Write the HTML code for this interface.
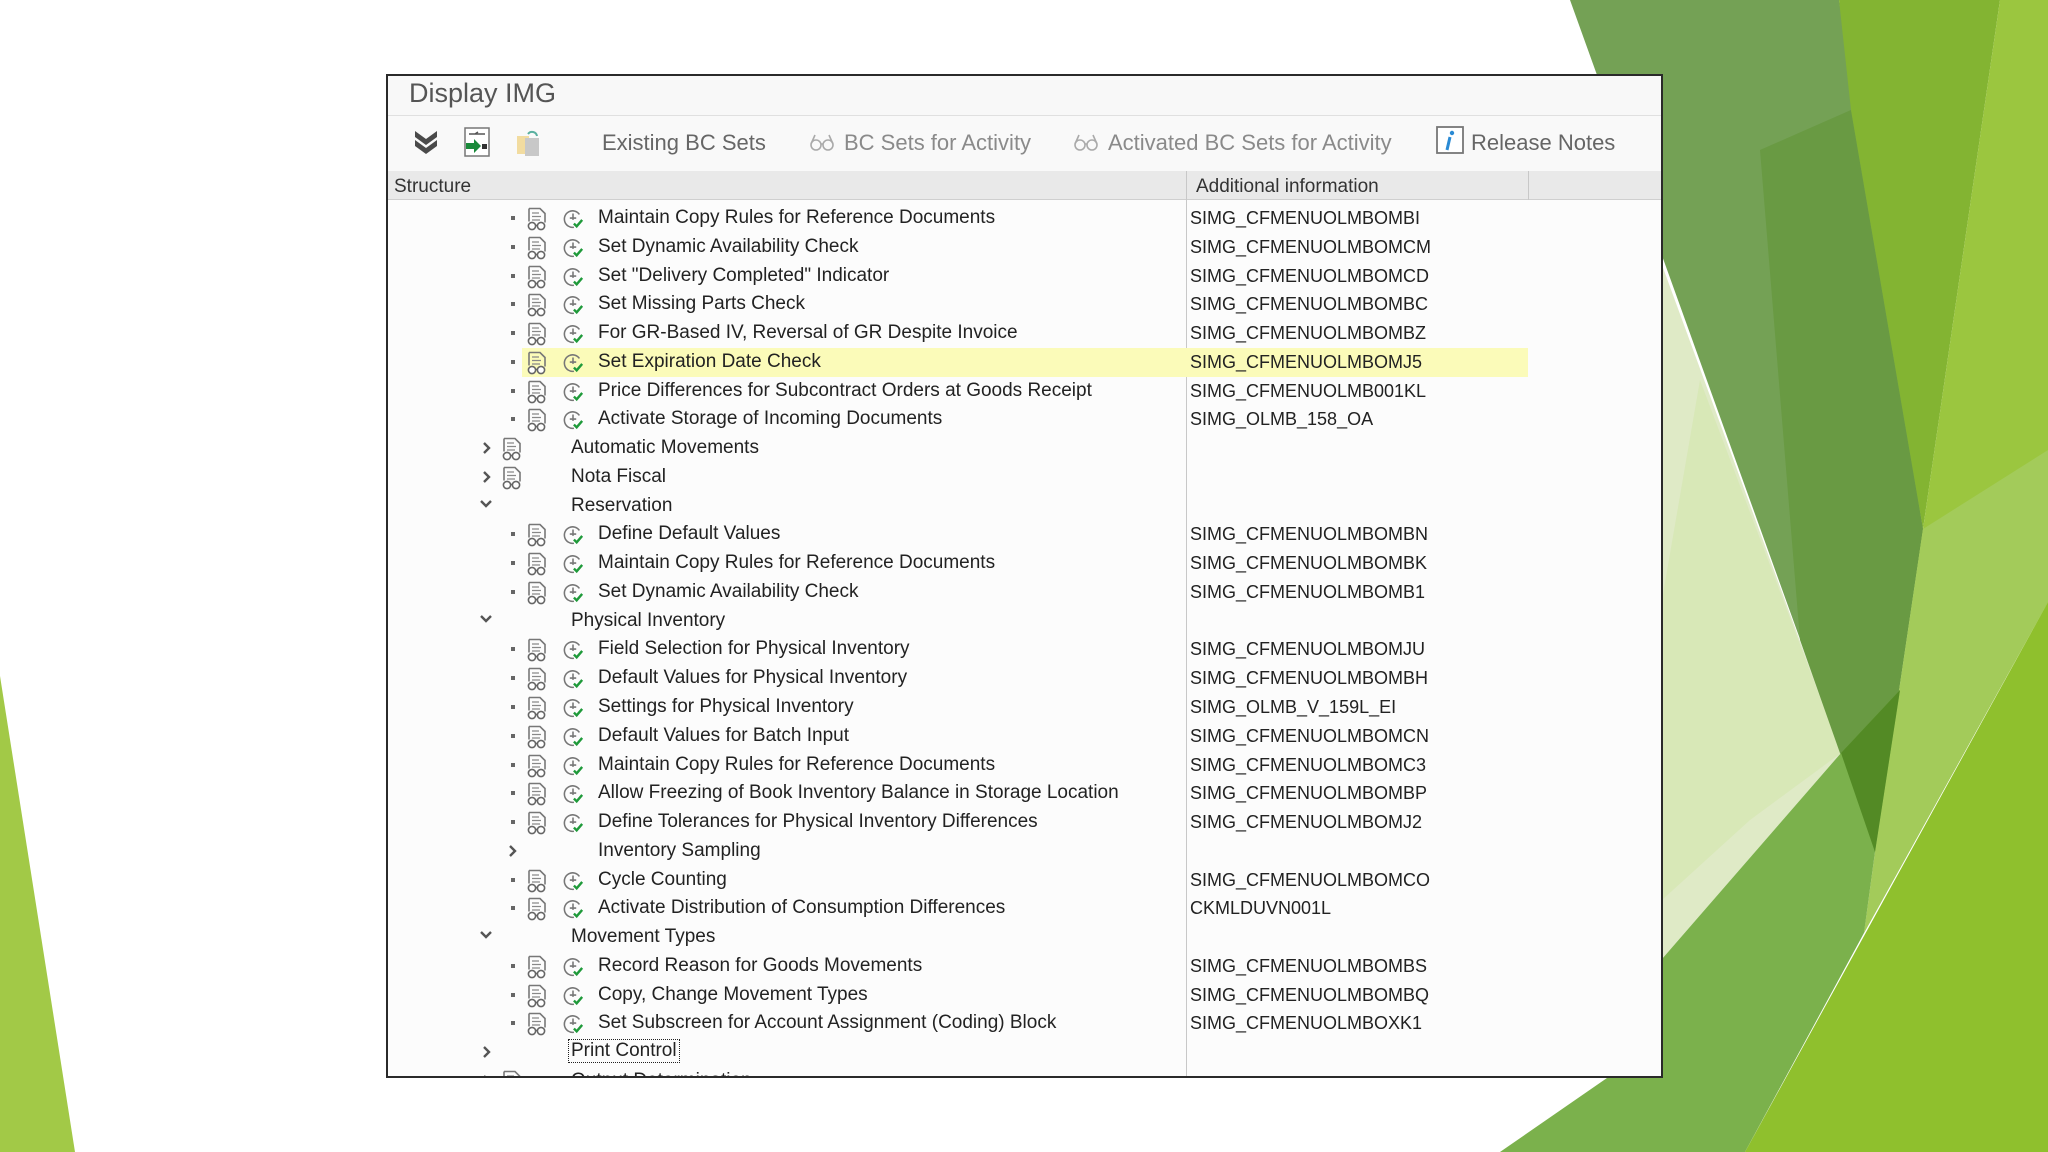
<!DOCTYPE html>
<html><head><meta charset="utf-8">
<style>
*{margin:0;padding:0;box-sizing:border-box}
body{width:2048px;height:1152px;overflow:hidden;background:#fff;position:relative;font-family:"Liberation Sans",Arial,sans-serif}
#bg{position:absolute;left:0;top:0}
#win{position:absolute;left:386px;top:74px;width:1277px;height:1004px;border:2px solid #2a2a2a;background:#fcfcfc;overflow:hidden}
.title{position:absolute;left:0;top:0;width:100%;height:40px;background:#f8f8f8;border-bottom:1px solid #e0e0e0}
.title span{position:absolute;left:21px;top:2px;font-size:27px;color:#555}
.tb{position:absolute;left:0;top:40px;width:100%;height:55px;background:#f9f9f9}
.tb .t{position:absolute;top:14px;font-size:22px;color:#666;white-space:nowrap}
.tb .g{color:#8a8a8a}
.hdr{position:absolute;left:0;top:95px;width:100%;height:29px;background:#e9e9e9;border-bottom:1px solid #cfcfcf}
.hdr span{position:absolute;top:5px;font-size:19px;color:#333}
.vl{position:absolute;top:95px;width:1px;background:#c8c8c8}
#rows{position:absolute;left:0;top:128px;width:100%}
.r{position:relative;height:28.77px;font-size:19px;color:#222;white-space:nowrap}
.r .tx{position:absolute;top:3px;left:210px}
.r .tx2{position:absolute;top:3px;left:183px}
.r .c2{position:absolute;top:4px;left:802px;font-size:18px}
.b{position:absolute;left:123px;top:12px;width:4px;height:4px;background:#666}
.di{position:absolute;left:138px;top:3px}
.ci{position:absolute;left:174px;top:4px}
.di2{position:absolute;left:113px;top:3px}
.ch{position:absolute;left:93px;top:7px}
.ch3{position:absolute;left:119px;top:7px}
.hl{background:linear-gradient(to right,transparent 134px,#fbfbb9 134px,#fbfbb9 1140px,transparent 1140px)}
.pc{border:1.5px dotted #222;padding:0 2px;margin-left:-3px;top:1px!important}
</style></head><body>
<svg id="bg" width="2048" height="1152">
<polygon points="0,676 75,1152 0,1152" fill="#a2c947"/>
<polygon points="1662,265 1841,753 1662,959" fill="#dfeac6"/>
<polygon points="1700,380 1841,753 1750,820 1662,900 1662,600" fill="#d4e6ad" opacity=".6"/>
<polygon points="1570,0 1839,0 1923,529 1875,852 1841,753" fill="#74a155"/>
<polygon points="1760,150 1851,110 1923,529 1875,852 1800,640" fill="#699a43"/>
<polygon points="1839,0 2000,0 1923,529 1851,110" fill="#83b432"/>
<polygon points="2000,0 2048,0 2048,602 1864,933 1923,529" fill="#9bc63f"/>
<polygon points="1923,529 2048,450 2048,602 1864,933 1875,852" fill="#a3cb5a"/>
<polygon points="1500,1152 1662,1040 1662,959 1841,753 1900,690 1875,852 1864,933 1745,1152" fill="#7bb14c"/>
<polygon points="1841,753 1900,690 1875,852" fill="#538a25"/>
<polygon points="1745,1152 2048,602 2048,1152" fill="#8fc02d"/>
</svg>
<svg width="0" height="0" style="position:absolute">
<defs>
<symbol id="doc" viewBox="0 0 22 24">
<path d="M3 1.5h11l5 5v9" fill="none" stroke="#777" stroke-width="1.6"/>
<path d="M3 1.5v13" stroke="#777" stroke-width="1.6"/>
<path d="M6 6h7M6 9.5h9M6 13h8" stroke="#888" stroke-width="1.3"/>
<circle cx="6" cy="19" r="3.6" fill="#fff" stroke="#666" stroke-width="1.6"/>
<circle cx="15" cy="19" r="3.6" fill="#fff" stroke="#666" stroke-width="1.6"/>
<path d="M9.5 18.5h2" stroke="#666" stroke-width="1.4"/>
</symbol>
<symbol id="clk" viewBox="0 0 24 24">
<path d="M19 7A9 9 0 1 0 13 21" fill="none" stroke="#777" stroke-width="1.7"/>
<path d="M12 6v7M8.5 11h7" stroke="#777" stroke-width="1.7"/>
<path d="M13 17l3 3 6-7" fill="none" stroke="#1f9a3a" stroke-width="2.6"/>
</symbol>
<symbol id="cr" viewBox="0 0 12 14"><path d="M3 2l5 5-5 5" fill="none" stroke="#555" stroke-width="2.4"/></symbol>
<symbol id="cd" viewBox="0 0 14 12"><path d="M2 3l5 5 5-5" fill="none" stroke="#555" stroke-width="2.4"/></symbol>
</defs></svg>
<div id="win">
<div class="title"><span>Display IMG</span></div>
<div class="tb">
<svg style="position:absolute;left:24px;top:12px" width="28" height="28" viewBox="0 0 28 28"><path d="M3 3l11 8 11-8v6l-11 8-11-8z" fill="#4a4a4a"/><path d="M3 12l11 8 11-8v6l-11 8-11-8z" fill="#4a4a4a"/></svg>
<svg style="position:absolute;left:75px;top:10px" width="28" height="32" viewBox="0 0 28 32"><rect x="2" y="2" width="24" height="28" fill="#fff" stroke="#777" stroke-width="1.5"/><path d="M6 8h16M12 8l3-2M6 21h6" stroke="#555" stroke-width="1.5"/><path d="M3 17h8v-4l7 7-7 7v-4H3z" fill="#1a8a3a"/><rect x="19" y="18" width="5" height="5" fill="#333"/></svg>
<svg style="position:absolute;left:127px;top:10px" width="28" height="32" viewBox="0 0 28 32"><rect x="2" y="10" width="12" height="18" fill="#f2dca0"/><rect x="10" y="12" width="14" height="18" fill="#c8c8c8"/><path d="M13 8a5 5 0 0 1 9 2" fill="none" stroke="#5ab0a0" stroke-width="2"/></svg>
<span class="t" style="left:214px">Existing BC Sets</span>
<svg style="position:absolute;left:421px;top:16px" width="26" height="20" viewBox="0 0 26 20"><circle cx="7" cy="13" r="5" fill="none" stroke="#aaa" stroke-width="1.6"/><circle cx="19" cy="13" r="5" fill="none" stroke="#aaa" stroke-width="1.6"/><path d="M2 12L6 3M24 12L20 3M12 12h2" stroke="#aaa" stroke-width="1.6" fill="none"/></svg>
<span class="t g" style="left:456px">BC Sets for Activity</span>
<svg style="position:absolute;left:685px;top:16px" width="26" height="20" viewBox="0 0 26 20"><circle cx="7" cy="13" r="5" fill="none" stroke="#aaa" stroke-width="1.6"/><circle cx="19" cy="13" r="5" fill="none" stroke="#aaa" stroke-width="1.6"/><path d="M2 12L6 3M24 12L20 3M12 12h2" stroke="#aaa" stroke-width="1.6" fill="none"/></svg>
<span class="t g" style="left:720px">Activated BC Sets for Activity</span>
<svg style="position:absolute;left:1047px;top:9px" width="30" height="30" viewBox="0 0 30 30"><rect x="2" y="2" width="26" height="26" fill="#fff" stroke="#777" stroke-width="1.8"/><circle cx="17" cy="8" r="2.2" fill="#2a8ad4"/><path d="M15 12l-3 13" stroke="#2a8ad4" stroke-width="3"/></svg>
<span class="t" style="left:1083px">Release Notes</span>
</div>
<div class="hdr"><span style="left:6px">Structure</span><span style="left:808px">Additional information</span></div>
<div class="vl" style="left:798px;height:910px"></div>
<div class="vl" style="left:1140px;height:29px"></div>
<div id="rows">
<div class="r"><i class="b"></i><svg class="di" width="22" height="24"><use href="#doc"/></svg><svg class="ci" width="22" height="22"><use href="#clk"/></svg><span class="tx">Maintain Copy Rules for Reference Documents</span><span class="c2">SIMG_CFMENUOLMBOMBI</span></div>
<div class="r"><i class="b"></i><svg class="di" width="22" height="24"><use href="#doc"/></svg><svg class="ci" width="22" height="22"><use href="#clk"/></svg><span class="tx">Set Dynamic Availability Check</span><span class="c2">SIMG_CFMENUOLMBOMCM</span></div>
<div class="r"><i class="b"></i><svg class="di" width="22" height="24"><use href="#doc"/></svg><svg class="ci" width="22" height="22"><use href="#clk"/></svg><span class="tx">Set "Delivery Completed" Indicator</span><span class="c2">SIMG_CFMENUOLMBOMCD</span></div>
<div class="r"><i class="b"></i><svg class="di" width="22" height="24"><use href="#doc"/></svg><svg class="ci" width="22" height="22"><use href="#clk"/></svg><span class="tx">Set Missing Parts Check</span><span class="c2">SIMG_CFMENUOLMBOMBC</span></div>
<div class="r"><i class="b"></i><svg class="di" width="22" height="24"><use href="#doc"/></svg><svg class="ci" width="22" height="22"><use href="#clk"/></svg><span class="tx">For GR-Based IV, Reversal of GR Despite Invoice</span><span class="c2">SIMG_CFMENUOLMBOMBZ</span></div>
<div class="r hl"><i class="b"></i><svg class="di" width="22" height="24"><use href="#doc"/></svg><svg class="ci" width="22" height="22"><use href="#clk"/></svg><span class="tx">Set Expiration Date Check</span><span class="c2">SIMG_CFMENUOLMBOMJ5</span></div>
<div class="r"><i class="b"></i><svg class="di" width="22" height="24"><use href="#doc"/></svg><svg class="ci" width="22" height="22"><use href="#clk"/></svg><span class="tx">Price Differences for Subcontract Orders at Goods Receipt</span><span class="c2">SIMG_CFMENUOLMB001KL</span></div>
<div class="r"><i class="b"></i><svg class="di" width="22" height="24"><use href="#doc"/></svg><svg class="ci" width="22" height="22"><use href="#clk"/></svg><span class="tx">Activate Storage of Incoming Documents</span><span class="c2">SIMG_OLMB_158_OA</span></div>
<div class="r"><svg class="ch" width="12" height="14"><use href="#cr"/></svg><svg class="di2" width="22" height="24"><use href="#doc"/></svg><span class="tx2">Automatic Movements</span></div>
<div class="r"><svg class="ch" width="12" height="14"><use href="#cr"/></svg><svg class="di2" width="22" height="24"><use href="#doc"/></svg><span class="tx2">Nota Fiscal</span></div>
<div class="r"><svg class="ch" style="left:91px;top:6px" width="14" height="12"><use href="#cd"/></svg><span class="tx2">Reservation</span></div>
<div class="r"><i class="b"></i><svg class="di" width="22" height="24"><use href="#doc"/></svg><svg class="ci" width="22" height="22"><use href="#clk"/></svg><span class="tx">Define Default Values</span><span class="c2">SIMG_CFMENUOLMBOMBN</span></div>
<div class="r"><i class="b"></i><svg class="di" width="22" height="24"><use href="#doc"/></svg><svg class="ci" width="22" height="22"><use href="#clk"/></svg><span class="tx">Maintain Copy Rules for Reference Documents</span><span class="c2">SIMG_CFMENUOLMBOMBK</span></div>
<div class="r"><i class="b"></i><svg class="di" width="22" height="24"><use href="#doc"/></svg><svg class="ci" width="22" height="22"><use href="#clk"/></svg><span class="tx">Set Dynamic Availability Check</span><span class="c2">SIMG_CFMENUOLMBOMB1</span></div>
<div class="r"><svg class="ch" style="left:91px;top:6px" width="14" height="12"><use href="#cd"/></svg><span class="tx2">Physical Inventory</span></div>
<div class="r"><i class="b"></i><svg class="di" width="22" height="24"><use href="#doc"/></svg><svg class="ci" width="22" height="22"><use href="#clk"/></svg><span class="tx">Field Selection for Physical Inventory</span><span class="c2">SIMG_CFMENUOLMBOMJU</span></div>
<div class="r"><i class="b"></i><svg class="di" width="22" height="24"><use href="#doc"/></svg><svg class="ci" width="22" height="22"><use href="#clk"/></svg><span class="tx">Default Values for Physical Inventory</span><span class="c2">SIMG_CFMENUOLMBOMBH</span></div>
<div class="r"><i class="b"></i><svg class="di" width="22" height="24"><use href="#doc"/></svg><svg class="ci" width="22" height="22"><use href="#clk"/></svg><span class="tx">Settings for Physical Inventory</span><span class="c2">SIMG_OLMB_V_159L_EI</span></div>
<div class="r"><i class="b"></i><svg class="di" width="22" height="24"><use href="#doc"/></svg><svg class="ci" width="22" height="22"><use href="#clk"/></svg><span class="tx">Default Values for Batch Input</span><span class="c2">SIMG_CFMENUOLMBOMCN</span></div>
<div class="r"><i class="b"></i><svg class="di" width="22" height="24"><use href="#doc"/></svg><svg class="ci" width="22" height="22"><use href="#clk"/></svg><span class="tx">Maintain Copy Rules for Reference Documents</span><span class="c2">SIMG_CFMENUOLMBOMC3</span></div>
<div class="r"><i class="b"></i><svg class="di" width="22" height="24"><use href="#doc"/></svg><svg class="ci" width="22" height="22"><use href="#clk"/></svg><span class="tx">Allow Freezing of Book Inventory Balance in Storage Location</span><span class="c2">SIMG_CFMENUOLMBOMBP</span></div>
<div class="r"><i class="b"></i><svg class="di" width="22" height="24"><use href="#doc"/></svg><svg class="ci" width="22" height="22"><use href="#clk"/></svg><span class="tx">Define Tolerances for Physical Inventory Differences</span><span class="c2">SIMG_CFMENUOLMBOMJ2</span></div>
<div class="r"><svg class="ch3" width="12" height="14"><use href="#cr"/></svg><span class="tx">Inventory Sampling</span></div>
<div class="r"><i class="b"></i><svg class="di" width="22" height="24"><use href="#doc"/></svg><svg class="ci" width="22" height="22"><use href="#clk"/></svg><span class="tx">Cycle Counting</span><span class="c2">SIMG_CFMENUOLMBOMCO</span></div>
<div class="r"><i class="b"></i><svg class="di" width="22" height="24"><use href="#doc"/></svg><svg class="ci" width="22" height="22"><use href="#clk"/></svg><span class="tx">Activate Distribution of Consumption Differences</span><span class="c2">CKMLDUVN001L</span></div>
<div class="r"><svg class="ch" style="left:91px;top:6px" width="14" height="12"><use href="#cd"/></svg><span class="tx2">Movement Types</span></div>
<div class="r"><i class="b"></i><svg class="di" width="22" height="24"><use href="#doc"/></svg><svg class="ci" width="22" height="22"><use href="#clk"/></svg><span class="tx">Record Reason for Goods Movements</span><span class="c2">SIMG_CFMENUOLMBOMBS</span></div>
<div class="r"><i class="b"></i><svg class="di" width="22" height="24"><use href="#doc"/></svg><svg class="ci" width="22" height="22"><use href="#clk"/></svg><span class="tx">Copy, Change Movement Types</span><span class="c2">SIMG_CFMENUOLMBOMBQ</span></div>
<div class="r"><i class="b"></i><svg class="di" width="22" height="24"><use href="#doc"/></svg><svg class="ci" width="22" height="22"><use href="#clk"/></svg><span class="tx">Set Subscreen for Account Assignment (Coding) Block</span><span class="c2">SIMG_CFMENUOLMBOXK1</span></div>
<div class="r"><svg class="ch" width="12" height="14"><use href="#cr"/></svg><span class="tx2 pc">Print Control</span></div>
<div class="r"><svg class="ch" width="12" height="14"><use href="#cr"/></svg><svg class="di2" width="22" height="24"><use href="#doc"/></svg><span class="tx2">Output Determination</span></div>
</div>
</div>
</body></html>
